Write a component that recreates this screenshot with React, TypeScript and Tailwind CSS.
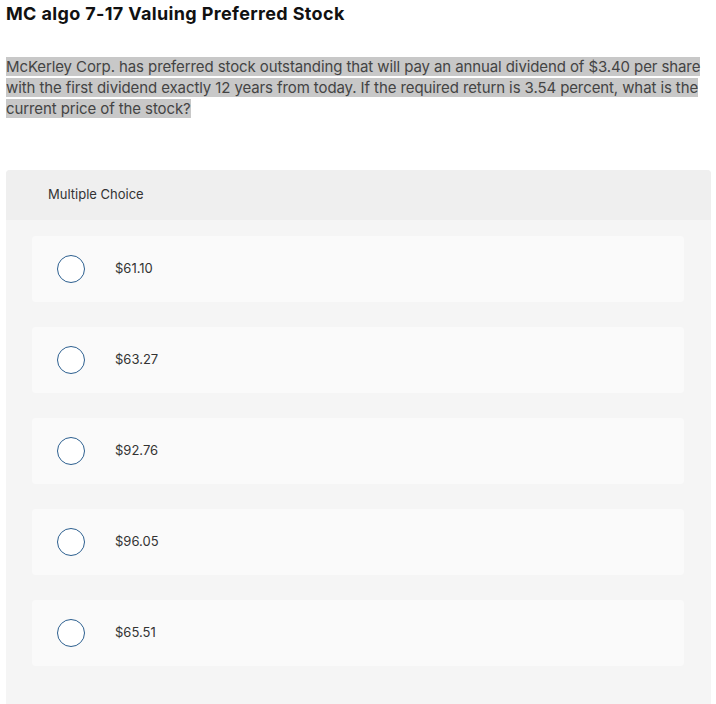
const choices = ['$61.10', '$63.27', '$92.76', '$96.05', '$65.51'];

export default function App() {
  return (
    <div className="min-h-[704px] bg-white pl-[6px] pr-[5px] font-['Inter','Liberation_Sans',sans-serif] text-[#333]">
      <h1 className="pt-[2px] text-[18px] font-bold leading-[24px] tracking-[0.35px] text-[#111]">
        MC algo 7-17 Valuing Preferred Stock
      </h1>

      <p className="mt-[30px] text-[15px] leading-[21px] tracking-[-0.1px] text-[#444]">
        <span className="bg-[#c8c8c8] box-decoration-clone">
          McKerley Corp. has preferred stock outstanding that will pay an annual dividend of $3.40 per share
          <br />
          with the first dividend exactly 12 years from today. If the required return is 3.54 percent, what is the
          <br />
          current price of the stock?
        </span>
      </p>

      <div className="mt-[51px] rounded-t-[4px] bg-[#f5f5f5] pb-[40px]">
        <div className="flex h-[50px] items-center rounded-t-[4px] bg-[#efefef] pl-[42px] text-[13px] text-[#333]">
          Multiple Choice
        </div>
        <div className="flex flex-col gap-[25px] pl-[26px] pr-[27px] pt-[16px]">
          {choices.map(c => (
            <div key={c} className="flex h-[66px] items-center rounded-[4px] bg-[#fafafa]">
              <div className="ml-[25px] h-[28px] w-[28px] rounded-full border-[1.5px] border-[#2c5f8f] bg-white" />
              <span className="ml-[30px] text-[13px] text-[#333]">{c}</span>
            </div>
          ))}
        </div>
      </div>
    </div>
  );
}
